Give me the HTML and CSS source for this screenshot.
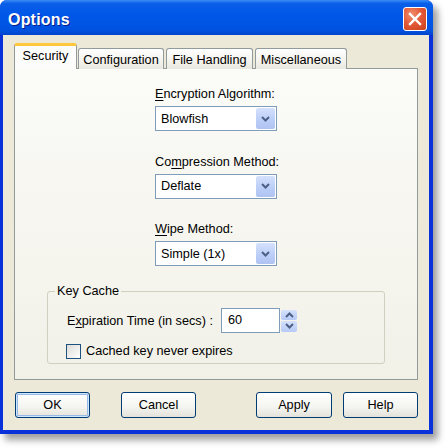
FILE: index.html
```html
<!DOCTYPE html>
<html>
<head>
<meta charset="utf-8">
<link rel="stylesheet" href="styles.css">
</head>
<body>
<div class="window">
  <div class="titlebar">
    <span class="title">Options</span>
    <div class="close">
      <svg width="14" height="14" viewBox="0 0 14 14"><path d="M2 2 L12 12 M12 2 L2 12" stroke="#fff" stroke-width="2.4" stroke-linecap="square"/></svg>
    </div>
  </div>
  <div class="client">
    <div class="tabs">
      <div class="tab active w1">Security</div>
      <div class="tab w2">Configuration</div>
      <div class="tab w3">File Handling</div>
      <div class="tab w4">Miscellaneous</div>
    </div>
    <div class="panel">
      <div class="fields">
        <div class="lbl"><u>E</u>ncryption Algorithm:</div>
        <div class="combo"><span class="val">Blowfish</span><span class="drop"><svg width="9" height="6" viewBox="0 0 9 6"><path d="M1 1 L4.5 4.5 L8 1" fill="none" stroke="#4D6185" stroke-width="2"/></svg></span></div>
        <div class="lbl next">Co<u>m</u>pression Method:</div>
        <div class="combo"><span class="val">Deflate</span><span class="drop"><svg width="9" height="6" viewBox="0 0 9 6"><path d="M1 1 L4.5 4.5 L8 1" fill="none" stroke="#4D6185" stroke-width="2"/></svg></span></div>
        <div class="lbl next"><u>W</u>ipe Method:</div>
        <div class="combo"><span class="val">Simple (1x)</span><span class="drop"><svg width="9" height="6" viewBox="0 0 9 6"><path d="M1 1 L4.5 4.5 L8 1" fill="none" stroke="#4D6185" stroke-width="2"/></svg></span></div>
      </div>
      <fieldset class="group">
        <legend>Key Cache</legend>
        <div class="row">
          <span class="rowlbl">E<u>x</u>piration Time (in secs) :</span>
          <div class="input">60</div>
          <div class="spin">
            <span class="sbtn"><svg width="9" height="6" viewBox="0 0 9 6"><path d="M1 5 L4.5 1.5 L8 5" fill="none" stroke="#4D6185" stroke-width="2"/></svg></span>
            <span class="sbtn"><svg width="9" height="6" viewBox="0 0 9 6"><path d="M1 1 L4.5 4.5 L8 1" fill="none" stroke="#4D6185" stroke-width="2"/></svg></span>
          </div>
        </div>
        <div class="check"><span class="box"></span><span>Cached key never expires</span></div>
      </fieldset>
    </div>
    <div class="buttons">
      <div class="btn default">OK</div>
      <div class="btn">Cancel</div>
      <div class="spacer"></div>
      <div class="btn wide">Apply</div>
      <div class="btn">Help</div>
    </div>
  </div>
</div>
</body>
</html>
```

FILE: styles.css
```css
* { box-sizing: border-box; }
html, body { margin: 0; padding: 0; background: #fff; }
body { width: 448px; height: 448px; overflow: hidden; font-family: "Liberation Sans", Arial, sans-serif; font-size: 12.7px; color: #000; }
u { text-decoration: underline; text-underline-offset: 2px; }

.window {
  width: 433px; height: 434px;
  border-radius: 7px 7px 0 0;
  background: #0831D9;
  box-shadow: 5px 6px 7px rgba(0,0,0,0.38);
  display: flex; flex-direction: column;
}
.titlebar {
  height: 35px; flex: none;
  border-radius: 7px 7px 0 0;
  background: linear-gradient(#3D8DF6 0%, #0A5FE8 10%, #0057E8 40%, #0054E3 75%, #0050DC 90%, #0044CA 100%);
  display: flex; align-items: center; justify-content: space-between;
  padding: 0 6px 0 8px;
}
.title {
  color: #fff; font-weight: bold; font-size: 16px; letter-spacing: 0.2px;
  text-shadow: 1px 1px 0 #0A1E8C;
  margin-top: 4px;
}
.close {
  width: 24px; height: 24px; margin-top: 3px;
  border: 1px solid #fff; border-radius: 3px;
  background: radial-gradient(circle at 35% 30%, #F0906E 0%, #E45A39 45%, #C8401C 100%);
  display: flex; align-items: center; justify-content: center;
}
.client {
  flex: 1;
  margin: 0 4px 4px 3px;
  background: #ECE9D8;
  display: flex; flex-direction: column;
  padding: 9px 11px 0 11px;
}
.tabs { display: flex; align-items: flex-end; height: 25px; margin-bottom: -1px; position: relative; z-index: 1; }
.tab {
  height: 21px; margin-right: 2px;
  border: 1px solid #919B9C; border-bottom: none;
  border-radius: 3px 3px 0 0;
  background: linear-gradient(#FFFFFF, #F3F2EC 60%, #E9E8E0);
  display: flex; align-items: center; justify-content: center;
  padding-top: 1px;
}
.tab.active {
  height: 26px; margin-right: 1px;
  border-top: 3px solid #FFC83C;
  background: #FCFCFB;
  padding-top: 0; padding-bottom: 4px;
}
.w1 { width: 63px; }
.w2 { width: 86px; }
.w3 { width: 87px; }
.w4 { width: 92px; }

.panel {
  width: 404px; height: 312px;
  border: 1px solid #919B9C;
  background: linear-gradient(#FBFBF8, #F2F1E8);
  padding: 17px 0 0 0;
}
.fields { margin-left: 140px; width: 122px; display: flex; flex-direction: column; }
.lbl { line-height: 16px; height: 16px; margin-bottom: 4px; white-space: nowrap; }
.lbl.next { margin-top: 22.5px; }
.combo {
  height: 25px; border: 1px solid #7F9DB9; background: #fff;
  display: flex; align-items: center; justify-content: space-between;
  padding: 1px;
}
.val { padding-left: 4px; }
.drop {
  width: 19px; height: 100%;
  background: linear-gradient(#D5E1FC, #BACDF8 60%, #AFC3F2);
  border-radius: 2px;
  display: flex; align-items: center; justify-content: center;
}
.group {
  margin: 17px 0 0 32px; width: 338px;
  border: 1px solid #D0D0BF; border-radius: 3px;
  padding: 9px 0 4px 7px;
}
.group legend { padding: 0 2px; line-height: 16px; }
.row { display: flex; align-items: center; height: 25px; padding-left: 12px; }
.rowlbl { width: 154px; white-space: nowrap; }
.input {
  width: 59px; height: 25px; border: 1px solid #7F9DB9; background: #fff;
  padding-left: 6px; line-height: 23px;
}
.spin { width: 16px; height: 22px; margin-left: 1px; display: flex; flex-direction: column; gap: 1px; }
.sbtn {
  flex: 1; background: linear-gradient(#D5E1FC, #B6CAF6);
  border-radius: 2px;
  display: flex; align-items: center; justify-content: center;
}
.check { display: flex; align-items: center; height: 16px; margin-top: 10px; padding-left: 11px; }
.box {
  width: 15px; height: 15px; border: 1px solid #1C5180;
  background: linear-gradient(135deg, #DCDCD7, #FFFFFF);
  margin-right: 5px;
}
.buttons { display: flex; margin-top: 12px; padding-left: 1px; }
.btn {
  width: 75px; height: 26px;
  border: 1px solid #003C74; border-radius: 3px;
  background: linear-gradient(#FFFFFF, #F4F4F0 60%, #E3E2DA);
  display: flex; align-items: center; justify-content: center;
  margin-right: 31px;
}
.btn.default { box-shadow: inset 0 0 0 1px #CEE7FF, inset 0 0 0 2px #98B8EA; }
.btn.wide { width: 76px; margin-right: 11px; }
.btn:last-child { margin-right: 0; }
.spacer { flex: 1; margin-right: -31px; }
```
